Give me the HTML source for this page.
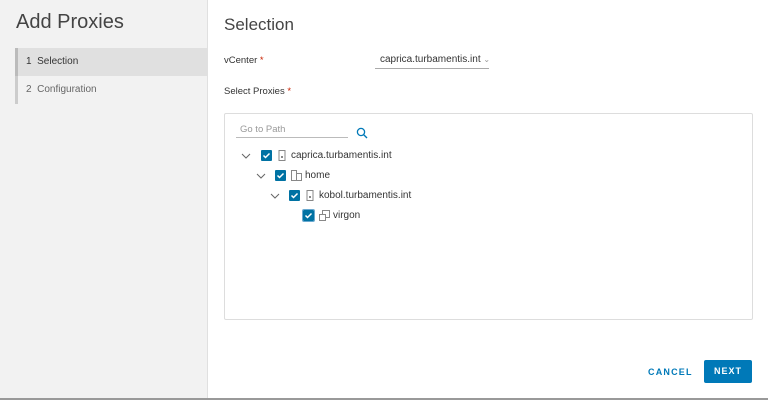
<!DOCTYPE html><html><head><style>
body{margin:0;width:768px;height:400px;position:relative;font-family:"Liberation Sans",sans-serif;background:#fff;overflow:hidden;color:#333}
.side{position:absolute;left:0;top:0;width:207px;height:400px;background:#f2f2f2;border-right:1px solid #e0e0e0}
.abs{position:absolute;white-space:nowrap}
.cb{position:absolute;width:11px;height:11px;background:#0072a3;border-radius:1px}
.cb svg{position:absolute;left:1px;top:1px}
.chev{position:absolute}
</style></head><body>
<div class="side">
<div class="abs" style="left:16px;top:11px;font-size:20px;color:#444">Add Proxies</div>
<div class="abs" style="left:15px;top:48px;width:192px;height:28px;background:#e0e0e0"></div>
<div class="abs" style="left:15px;top:48px;width:3px;height:56px;background:#ccc"></div>
<div class="abs" style="left:15px;top:48px;width:3px;height:28px;background:#bbb"></div>
<div class="abs" style="left:26px;top:56px;font-size:10px;color:#333">1&nbsp; Selection</div>
<div class="abs" style="left:26px;top:84px;font-size:10px;color:#666">2&nbsp; Configuration</div>
</div>
<div class="abs" style="left:224px;top:15px;font-size:17px;color:#444">Selection</div>
<div class="abs" style="left:224px;top:55px;font-size:9.5px">vCenter <span style="color:#c92100">*</span></div>
<div class="abs" style="left:224px;top:86px;font-size:9.5px">Select Proxies <span style="color:#c92100">*</span></div>
<div class="abs" style="left:380px;top:54px;font-size:10px;color:#333">caprica.turbamentis.int <span style="color:#999;font-size:8px">&#8964;</span></div>
<div class="abs" style="left:375px;top:68px;width:114px;height:1px;background:#aaa"></div>
<div class="abs" style="left:224px;top:113px;width:527px;height:205px;border:1px solid #ddd;border-radius:2px"></div>
<div class="abs" style="left:240px;top:124px;font-size:9.5px;color:#999">Go to Path</div>
<div class="abs" style="left:236px;top:137px;width:112px;height:1px;background:#bbb"></div>
<svg class="abs" style="left:356px;top:127px" width="12" height="12" viewBox="0 0 12 12"><circle cx="5" cy="5" r="3.6" fill="none" stroke="#0079b8" stroke-width="1.3"/><path d="M7.6 7.6L11 11" stroke="#0079b8" stroke-width="1.4"/></svg>
<svg class="abs" style="left:241px;top:152px" width="10" height="8"><path d="M1 2l4 4 4-4" fill="none" stroke="#666"/></svg>
<svg class="abs" style="left:256px;top:172px" width="10" height="8"><path d="M1 2l4 4 4-4" fill="none" stroke="#666"/></svg>
<svg class="abs" style="left:270px;top:192px" width="10" height="8"><path d="M1 2l4 4 4-4" fill="none" stroke="#666"/></svg>
<div class="cb" style="left:261px;top:150px"><svg width="9" height="9"><path d="M1.5 4.5l2 2 4-4" fill="none" stroke="#fff" stroke-width="1.5"/></svg></div>
<div class="cb" style="left:275px;top:170px"><svg width="9" height="9"><path d="M1.5 4.5l2 2 4-4" fill="none" stroke="#fff" stroke-width="1.5"/></svg></div>
<div class="cb" style="left:289px;top:190px"><svg width="9" height="9"><path d="M1.5 4.5l2 2 4-4" fill="none" stroke="#fff" stroke-width="1.5"/></svg></div>
<div class="cb" style="left:303px;top:210px;outline:1px solid #6aa9d0;outline-offset:0"><svg width="9" height="9"><path d="M1.5 4.5l2 2 4-4" fill="none" stroke="#fff" stroke-width="1.5"/></svg></div>
<svg class="abs" style="left:278px;top:150px" width="8" height="11"><rect x="1" y="0.5" width="6" height="10" fill="none" stroke="#888"/><rect x="3" y="6" width="2" height="2" fill="#888"/></svg>
<svg class="abs" style="left:291px;top:170px" width="11" height="11"><rect x="0.5" y="0.5" width="5" height="10" fill="none" stroke="#888"/><rect x="5.5" y="3.5" width="5" height="7" fill="none" stroke="#888"/></svg>
<svg class="abs" style="left:306px;top:190px" width="8" height="11"><rect x="1" y="0.5" width="6" height="10" fill="none" stroke="#888"/><rect x="3" y="6" width="2" height="2" fill="#888"/></svg>
<svg class="abs" style="left:319px;top:210px" width="11" height="11"><rect x="3.5" y="0.5" width="7" height="7" fill="none" stroke="#888"/><rect x="0.5" y="4.5" width="6" height="6" fill="#fff" stroke="#888"/></svg>
<div class="abs" style="left:291px;top:150px;font-size:10px">caprica.turbamentis.int</div>
<div class="abs" style="left:305px;top:170px;font-size:10px">home</div>
<div class="abs" style="left:319px;top:190px;font-size:10px">kobol.turbamentis.int</div>
<div class="abs" style="left:333px;top:210px;font-size:10px">virgon</div>
<div class="abs" style="left:648px;top:367px;font-size:9px;font-weight:bold;letter-spacing:1.2px;color:#0079b8">CANCEL</div>
<div class="abs" style="left:704px;top:360px;width:48px;height:23px;background:#0079b8;border-radius:2px;color:#fff;font-size:9px;font-weight:bold;letter-spacing:1px;text-align:center;line-height:23px">NEXT</div>
<div class="abs" style="left:0;top:398px;width:768px;height:2px;background:#999"></div>
</body></html>
